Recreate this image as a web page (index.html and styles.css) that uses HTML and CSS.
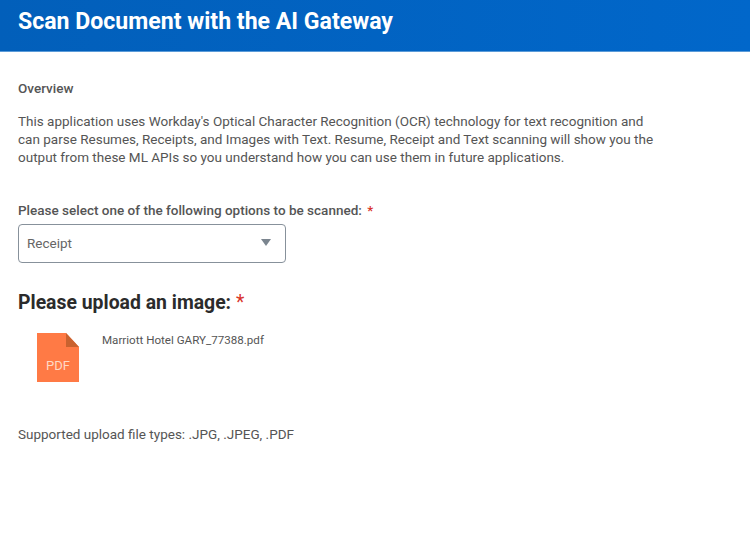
FILE: index.html
```html
<!DOCTYPE html>
<html lang="en">
  <head>
    <meta charset="UTF-8" />
    <title>Scan Document with the AI Gateway</title>
    <link rel="stylesheet" href="styles.css">
  </head>
  <body>
    <header class="header">
      <h1>Scan Document with the AI Gateway</h1>
    </header>
    <main class="content">
      <div class="overview">Overview</div>
      <p class="description">This application uses Workday's Optical Character Recognition (OCR) technology for text recognition and can parse Resumes, Receipts, and Images with Text. Resume, Receipt and Text scanning will show you the output from these ML APIs so you understand how you can use them in future applications.</p>
      <div class="selectLabel">Please select one of the following options to be scanned: <span class="required">*</span></div>
      <div class="select">
        <span>Receipt</span>
        <span class="arrow"></span>
      </div>
      <h2>Please upload an image: <span class="required">*</span></h2>
      <div class="file">
        <svg class="fileIcon" width="42" height="50" viewBox="0 0 42 50">
          <path d="M0 0H29L42 14V49H0Z" fill="#ff7a45" />
          <path d="M29 0L42 14H29Z" fill="#c9622f" />
          <text x="21" y="37" text-anchor="middle">PDF</text>
        </svg>
        <div class="fileName">Marriott Hotel GARY_77388.pdf</div>
      </div>
      <div class="types">Supported upload file types: .JPG, .JPEG, .PDF</div>
    </main>
  </body>
</html>
```

FILE: styles.css
```css
body {
  margin: 0;
  background-color: #fff;
  font-family: Roboto, "Liberation Sans", sans-serif;
  font-size: 13.5px;
  color: #555;
}
.header {
  height: 52px;
  background: linear-gradient(to right, #025fba, #0167ca);
  border-bottom: 1px solid #5b9bd8;
  box-sizing: border-box;
  padding: 7px 18px 0;
}
h1 {
  margin: 0;
  font-size: 23.1px;
  line-height: 30px;
  font-weight: 700;
  color: #fff;
}
.content {
  padding: 28px 18px 0;
}
.overview {
  line-height: 16px;
  font-weight: 500;
}
.description {
  width: 640px;
  margin: 16px 0 0;
  line-height: 18px;
}
.selectLabel {
  margin-top: 35px;
  line-height: 18px;
  font-weight: 500;
}
.required {
  margin-left: 2px;
  color: #d9342b;
}
.select {
  width: 268px;
  height: 39px;
  margin-top: 5px;
  padding: 0 14px 2px 8px;
  box-sizing: border-box;
  display: flex;
  align-items: center;
  justify-content: space-between;
  border: 1px solid #87919b;
  border-radius: 4px;
  color: #666;
}
.arrow {
  width: 0;
  height: 0;
  border-left: 5px solid transparent;
  border-right: 5px solid transparent;
  border-top: 7px solid #7b858f;
}
h2 {
  margin: 27px 0 0;
  font-size: 19.4px;
  line-height: 26px;
  font-weight: 700;
  color: #2b2b2b;
}
h2 .required {
  margin-left: 0;
  font-weight: 400;
}
.file {
  display: flex;
  margin: 17px 0 0 19px;
}
.fileIcon {
  flex: none;
}
.fileIcon text {
  font-size: 13px;
  fill: #ffd9c4;
}
.fileName {
  margin: 0 0 0 23px;
  font-size: 11.6px;
  line-height: 14px;
}
.types {
  margin-top: 43px;
  line-height: 16px;
}
```
